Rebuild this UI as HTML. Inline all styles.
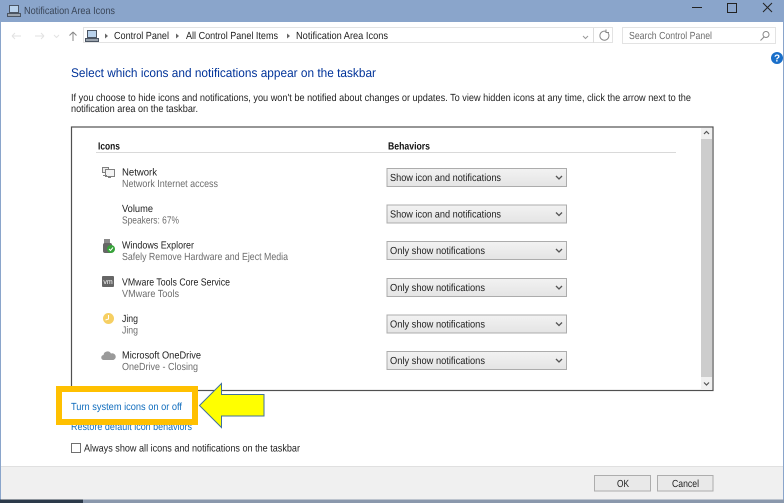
<!DOCTYPE html>
<html><head><meta charset="utf-8"><style>
html,body{margin:0;padding:0;background:#fff;overflow:hidden}
svg{display:block;filter:blur(.3px)}
text{font-family:"Liberation Sans",sans-serif;font-size:10.3px;fill:#222}
.g{fill:#6d6d6d}.l{fill:#0f6cbd}.b{font-weight:bold;fill:#111}
</style></head><body>
<svg width="784" height="503" viewBox="0 0 784 503" xmlns="http://www.w3.org/2000/svg" text-rendering="geometricPrecision">
<defs><linearGradient id="s" x1="0" y1="0" x2="0" y2="1"><stop offset="0" stop-color="#f2f2f2"/><stop offset="1" stop-color="#e4e4e4"/></linearGradient>
<g id="pc"><rect x="2.5" y=".5" width="9" height="7" fill="#b9d2ec" stroke="#4b5563"/><rect x=".5" y="8.5" width="13" height="3" fill="#9aa3ad" stroke="#4b5563"/></g>
<path id="dv" d="M0 0l3 3 3-3" fill="none" stroke="#555" stroke-width="1.300"/></defs>
<rect width="784" height="503" fill="#fff"/>
<rect width="784" height="22" fill="#8aa5cb"/>
<rect y="22" width="1" height="478" fill="#8aa5cb"/><rect x="783" y="22" width="1" height="478" fill="#8aa5cb"/>
<use href="#pc" x="7" y="5"/>
<text x="24" y="14" textLength="91" lengthAdjust="spacingAndGlyphs" style="fill:#3a4658">Notification Area Icons</text>
<path d="M692 7.500h10" stroke="#222"/><rect x="727.500" y="3.500" width="9" height="9" fill="none" stroke="#222"/><path d="M763 3l9 9M772 3l-9 9" stroke="#222"/>
<!-- nav -->
<path d="M12 36h9M12 36l3-3M12 36l3 3M35 36h9M44 36l-3-3M44 36l-3 3M54 35l2.500 2.500 2.500-2.500" fill="none" stroke="#e2e2e2"/>
<path d="M73 41v-9M73 32l-3.500 3.500M73 32l3.500 3.500" fill="none" stroke="#888"/>
<rect x="83.500" y="27.500" width="529" height="15" fill="#fff" stroke="#e3e3e3"/><path d="M593.500 28v15" stroke="#ddd"/>
<use href="#pc" x="85" y="30"/>
<path d="M105 33.500l3 2.500-3 2.500zM176 33.500l3 2.500-3 2.500zM287 33.500l3 2.500-3 2.500z" fill="#666"/>
<text x="114" y="39" textLength="55" lengthAdjust="spacingAndGlyphs">Control Panel</text>
<text x="186" y="39" textLength="92" lengthAdjust="spacingAndGlyphs">All Control Panel Items</text>
<text x="296" y="39" textLength="92" lengthAdjust="spacingAndGlyphs">Notification Area Icons</text>
<path d="M583 36l2.500 2.500 2.500-2.500" fill="none" stroke="#999"/>
<path d="M608 33a4.500 4.500 0 1 1-2-1.500M606 29.500v3h3" fill="none" stroke="#888"/>
<rect x="622.500" y="27.500" width="153" height="16" fill="#fff" stroke="#e3e3e3"/>
<text x="629" y="39" textLength="83" lengthAdjust="spacingAndGlyphs" class="g">Search Control Panel</text>
<circle cx="766" cy="34.500" r="3" fill="none" stroke="#888"/><path d="M764 37l-3.500 3.500" stroke="#888"/>
<circle cx="777" cy="58" r="6" fill="#1a6fc9"/><text x="777" y="61.500" text-anchor="middle" style="font-size:10px;font-weight:bold;fill:#fff">?</text>
<!-- heading -->
<text x="71" y="77" textLength="305" lengthAdjust="spacingAndGlyphs" style="font-size:12.500px;fill:#003399">Select which icons and notifications appear on the taskbar</text>
<text x="71" y="101" textLength="620" lengthAdjust="spacingAndGlyphs">If you choose to hide icons and notifications, you won't be notified about changes or updates. To view hidden icons at any time, click the arrow next to the</text>
<text x="71" y="112" textLength="127" lengthAdjust="spacingAndGlyphs">notification area on the taskbar.</text>
<!-- list -->
<rect x="71.500" y="127" width="641.500" height="263.500" fill="#fff" stroke="#505050" stroke-width="1.200"/>
<rect x="701" y="128" width="11" height="262" fill="#f0f0f0"/>
<rect x="701" y="139" width="11" height="238" fill="#cdcdcd"/>
<path d="M704 134l2.500-2.500 2.500 2.500M704 382.500l2.500 2.500 2.500-2.500" fill="none" stroke="#555" stroke-width="1.200"/>
<text x="98" y="149.500" textLength="22" lengthAdjust="spacingAndGlyphs" class="b">Icons</text>
<text x="388" y="149.500" textLength="42" lengthAdjust="spacingAndGlyphs" class="b">Behaviors</text>
<path d="M96 152.500h580" stroke="#d9d9d9"/>
<text x="122" y="175.500" textLength="35" lengthAdjust="spacingAndGlyphs">Network</text>
<text x="122" y="187" textLength="96" lengthAdjust="spacingAndGlyphs" class="g">Network Internet access</text>
<text x="122" y="212" textLength="31" lengthAdjust="spacingAndGlyphs">Volume</text>
<text x="122" y="223.500" textLength="57" lengthAdjust="spacingAndGlyphs" class="g">Speakers: 67%</text>
<text x="122" y="248.500" textLength="72" lengthAdjust="spacingAndGlyphs">Windows Explorer</text>
<text x="122" y="260" textLength="166" lengthAdjust="spacingAndGlyphs" class="g">Safely Remove Hardware and Eject Media</text>
<text x="122" y="285.500" textLength="108" lengthAdjust="spacingAndGlyphs">VMware Tools Core Service</text>
<text x="122" y="297" textLength="57" lengthAdjust="spacingAndGlyphs" class="g">VMware Tools</text>
<text x="122" y="322" textLength="16" lengthAdjust="spacingAndGlyphs">Jing</text>
<text x="122" y="333.500" textLength="16" lengthAdjust="spacingAndGlyphs" class="g">Jing</text>
<text x="122" y="358.500" textLength="79" lengthAdjust="spacingAndGlyphs">Microsoft OneDrive</text>
<text x="122" y="370" textLength="76" lengthAdjust="spacingAndGlyphs" class="g">OneDrive - Closing</text>
<!-- icons -->
<rect x="102.500" y="167.500" width="6" height="5" fill="#ececec" stroke="#808080"/>
<rect x="105.500" y="169.500" width="9" height="7" fill="#f4f4f4" stroke="#808080"/>
<path d="M103 175.500h4M108 177.500h3" stroke="#808080"/>
<rect x="104" y="239" width="6" height="5" fill="#8a8a8a"/><rect x="103" y="243" width="9" height="10" rx="2" fill="#666"/><circle cx="111" cy="249" r="4" fill="#37a33a"/><path d="M109 249l1.500 1.500 2.500-3" fill="none" stroke="#fff"/>
<rect x="102" y="276" width="12" height="11" rx="1" fill="#666"/><text x="108" y="284" text-anchor="middle" style="font-size:7px;fill:#fff">vm</text>
<circle cx="108.500" cy="318.500" r="5.500" fill="#f6cf62"/><path d="M108.500 315v4l-3 1" fill="none" stroke="#fff"/>
<path d="M104 360a2.500 2.500 0 0 1-.5-5 4 4 0 0 1 7.500-1.500 3.300 3.300 0 0 1 2.500 6.500z" fill="#9a9a9a"/>
<!-- selects -->
<g><rect x="387" y="168.500" width="179.500" height="18" fill="url(#s)" stroke="#acacac"/><use href="#dv" x="556" y="176"/><text x="390" y="181" textLength="111" lengthAdjust="spacingAndGlyphs">Show icon and notifications</text></g>
<g><rect x="387" y="205" width="179.500" height="18" fill="url(#s)" stroke="#acacac"/><use href="#dv" x="556" y="212.500"/><text x="390" y="217.500" textLength="111" lengthAdjust="spacingAndGlyphs">Show icon and notifications</text></g>
<g><rect x="387" y="241.500" width="179.500" height="18" fill="url(#s)" stroke="#acacac"/><use href="#dv" x="556" y="249"/><text x="390" y="254" textLength="95" lengthAdjust="spacingAndGlyphs">Only show notifications</text></g>
<g><rect x="387" y="278.500" width="179.500" height="18" fill="url(#s)" stroke="#acacac"/><use href="#dv" x="556" y="286"/><text x="390" y="291" textLength="95" lengthAdjust="spacingAndGlyphs">Only show notifications</text></g>
<g><rect x="387" y="315" width="179.500" height="18" fill="url(#s)" stroke="#acacac"/><use href="#dv" x="556" y="322.500"/><text x="390" y="327.500" textLength="95" lengthAdjust="spacingAndGlyphs">Only show notifications</text></g>
<g><rect x="387" y="351.500" width="179.500" height="18" fill="url(#s)" stroke="#acacac"/><use href="#dv" x="556" y="359"/><text x="390" y="364" textLength="95" lengthAdjust="spacingAndGlyphs">Only show notifications</text></g>
<!-- links -->
<text x="71" y="430" textLength="121" lengthAdjust="spacingAndGlyphs" class="l">Restore default icon behaviors</text>
<rect x="59" y="389" width="136" height="33" fill="#fff" stroke="#ffc000" stroke-width="6"/>
<text x="71" y="410" textLength="111" lengthAdjust="spacingAndGlyphs" class="l">Turn system icons on or off</text>
<path d="M199.500 405.500L221.500 383.500V394.500H264V416H221.500V427.500Z" fill="#ffff00" stroke="#41719c"/>
<rect x="71.500" y="443.500" width="9" height="9" fill="#fff" stroke="#707070"/>
<text x="84" y="451.500" textLength="216" lengthAdjust="spacingAndGlyphs">Always show all icons and notifications on the taskbar</text>
<!-- footer -->
<rect x="1" y="466" width="782" height="34" fill="#f0f0f0"/><rect x="1" y="466" width="782" height="1" fill="#e0e0e0"/>
<rect x="594.500" y="475.500" width="56" height="15.500" fill="#e9e9e9" stroke="#adadad"/>
<text x="617" y="487" textLength="12" lengthAdjust="spacingAndGlyphs">OK</text>
<rect x="657.500" y="475.500" width="55.500" height="15.500" fill="#e9e9e9" stroke="#adadad"/>
<text x="672" y="487" textLength="27" lengthAdjust="spacingAndGlyphs">Cancel</text>
<rect y="499.500" width="784" height="3.500" fill="#8a98ac"/><rect y="499.500" width="83" height="3.500" fill="#2c3a4a"/>
</svg>
</body></html>
